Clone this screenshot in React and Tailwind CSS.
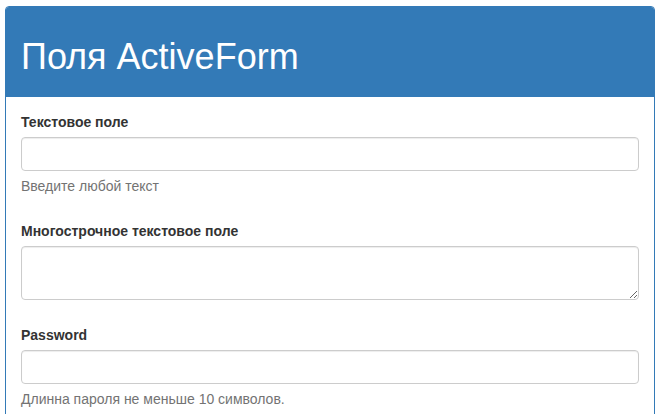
import React from 'react';

const fieldClass =
  'block w-full rounded-[4px] border border-[#ccc] bg-white px-3 py-[6px] text-[14px] leading-[20px] text-[#555] shadow-[inset_0_1px_1px_rgba(0,0,0,0.075)] outline-none';

function Label({ children }) {
  return <label className="mb-[5px] block text-[14px] font-bold leading-[20px] text-[#333]">{children}</label>;
}

function Hint({ children }) {
  return <div className="mt-[5px] mb-[10px] text-[14px] leading-[20px] text-[#737373]">{children}</div>;
}

export default function App() {
  return (
    <div className="min-h-screen bg-white pt-[6px] pl-[5px] font-['Liberation_Sans',Arial,sans-serif]">
      <div className="w-[650px] overflow-hidden rounded-[4px] border border-[#337ab7] bg-white">
        <div className="bg-[#337ab7] px-[15px] pt-[30px] pb-[20px] text-white">
          <h1 className="text-[36px] font-normal leading-[1.1]">Поля ActiveForm</h1>
        </div>
        <div className="flex flex-col p-[15px]">
          <div className="mb-[15px] flex flex-col">
            <Label>Текстовое поле</Label>
            <input type="text" className={`${fieldClass} h-[34px]`} />
            <Hint>Введите любой текст</Hint>
          </div>
          <div className="mb-[25px] flex flex-col">
            <Label>Многострочное текстовое поле</Label>
            <textarea rows={2} className={`${fieldClass} h-[54px]`} />
          </div>
          <div className="mb-[15px] flex flex-col">
            <Label>Password</Label>
            <input type="password" className={`${fieldClass} h-[34px]`} />
            <Hint>Длинна пароля не меньше 10 символов.</Hint>
          </div>
        </div>
      </div>
    </div>
  );
}
